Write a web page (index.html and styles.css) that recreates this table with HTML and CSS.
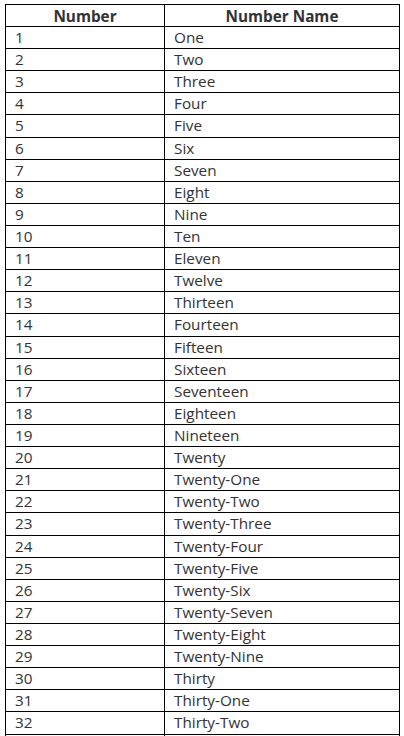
FILE: index.html
```html
<!DOCTYPE html>
<html>
<head>
<meta charset="utf-8">
<link rel="stylesheet" href="styles.css">
</head>
<body>
<table class="num-table">
<colgroup><col class="c1"><col class="c2"></colgroup>
<thead>
<tr><th>Number</th><th>Number Name</th></tr>
</thead>
<tbody>
<tr><td>1</td><td>One</td></tr>
<tr><td>2</td><td>Two</td></tr>
<tr><td>3</td><td>Three</td></tr>
<tr><td>4</td><td>Four</td></tr>
<tr><td>5</td><td>Five</td></tr>
<tr><td>6</td><td>Six</td></tr>
<tr><td>7</td><td>Seven</td></tr>
<tr><td>8</td><td>Eight</td></tr>
<tr><td>9</td><td>Nine</td></tr>
<tr><td>10</td><td>Ten</td></tr>
<tr><td>11</td><td>Eleven</td></tr>
<tr><td>12</td><td>Twelve</td></tr>
<tr><td>13</td><td>Thirteen</td></tr>
<tr><td>14</td><td>Fourteen</td></tr>
<tr><td>15</td><td>Fifteen</td></tr>
<tr><td>16</td><td>Sixteen</td></tr>
<tr><td>17</td><td>Seventeen</td></tr>
<tr><td>18</td><td>Eighteen</td></tr>
<tr><td>19</td><td>Nineteen</td></tr>
<tr><td>20</td><td>Twenty</td></tr>
<tr><td>21</td><td>Twenty-One</td></tr>
<tr><td>22</td><td>Twenty-Two</td></tr>
<tr><td>23</td><td>Twenty-Three</td></tr>
<tr><td>24</td><td>Twenty-Four</td></tr>
<tr><td>25</td><td>Twenty-Five</td></tr>
<tr><td>26</td><td>Twenty-Six</td></tr>
<tr><td>27</td><td>Twenty-Seven</td></tr>
<tr><td>28</td><td>Twenty-Eight</td></tr>
<tr><td>29</td><td>Twenty-Nine</td></tr>
<tr><td>30</td><td>Thirty</td></tr>
<tr><td>31</td><td>Thirty-One</td></tr>
<tr><td>32</td><td>Thirty-Two</td></tr>
<tr class="tail"><td></td><td></td></tr>
</tbody>
</table>
</body>
</html>
```
FILE: styles.css
```css
html, body {
  margin: 0;
  padding: 0;
  background: #ffffff;
}
body {
  padding: 4px 0 0 5px;
  font-family: "Open Sans", "Noto Sans", "DejaVu Sans", sans-serif;
  color: #333333;
}
.num-table {
  border-collapse: collapse;
  table-layout: fixed;
  width: 394px;
  font-size: 15.3px;
}
.num-table .c1 { width: 159px; }
.num-table .c2 { width: 235px; }
.num-table th,
.num-table td {
  border: 1px solid #000000;
  padding: 0 0 0 9px;
  line-height: 21.11px;
  text-align: left;
  vertical-align: middle;
  white-space: nowrap;
}
.num-table th {
  font-weight: bold;
  text-align: center;
  padding: 2px 0 0 0;
  line-height: 19px;
}
.num-table .tail td {
  height: 21px;
}
```
